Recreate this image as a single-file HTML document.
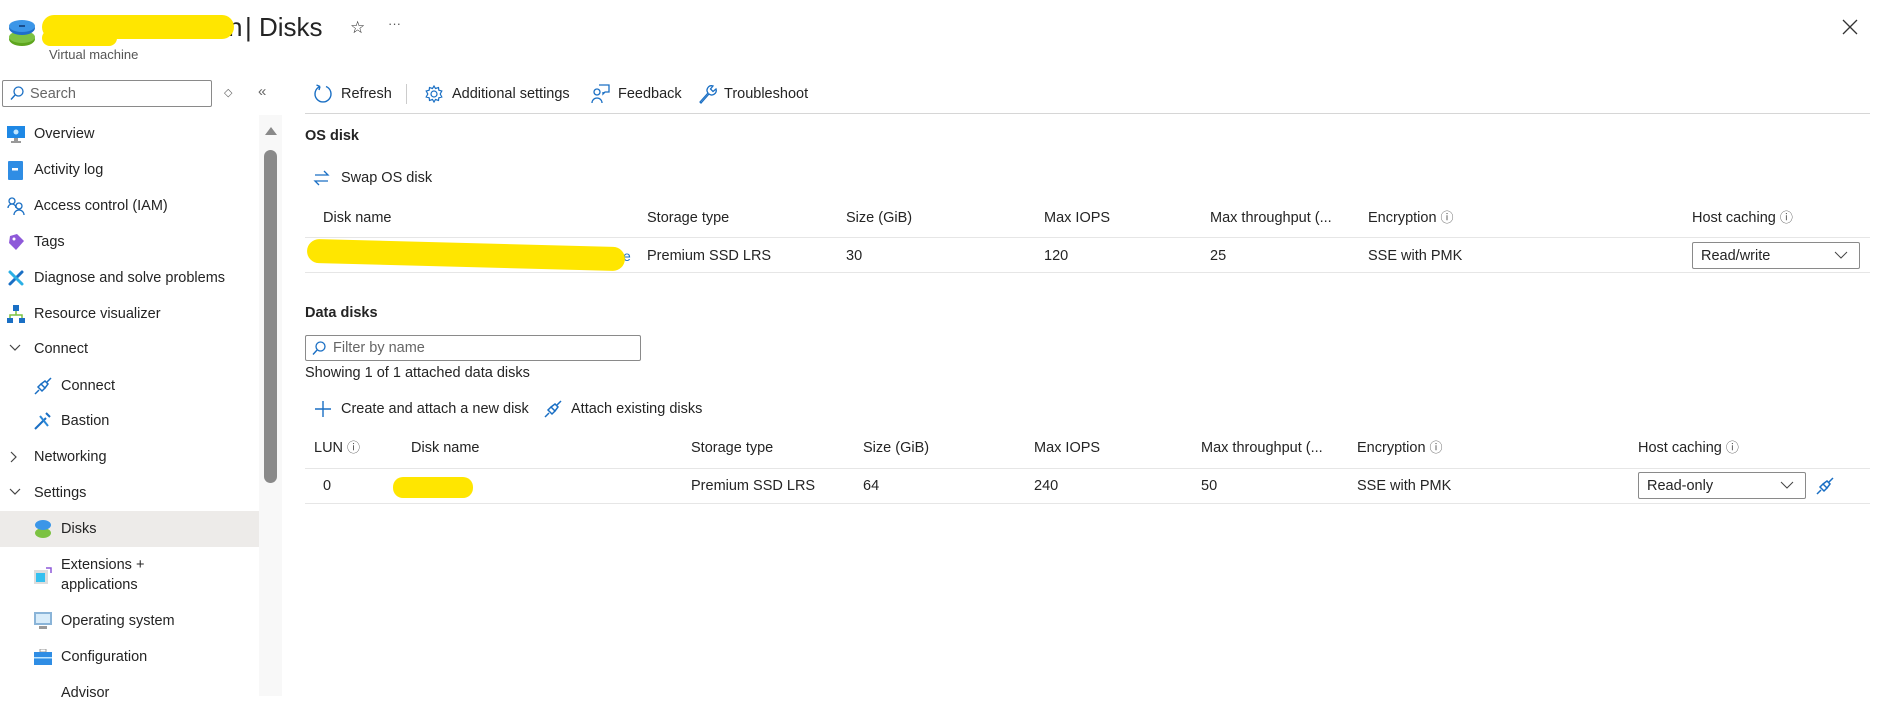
<!DOCTYPE html>
<html><head><meta charset="utf-8"><style>
*{margin:0;padding:0;box-sizing:border-box}
body{width:1890px;height:696px;overflow:hidden;background:#fff;font-family:"Liberation Sans",sans-serif;color:#242424;font-size:14.5px;position:relative}
.a{position:absolute;white-space:nowrap;line-height:20px;height:20px}
.ln{position:absolute;height:1px;background:#e6e6e6}
.box{position:absolute;border:1px solid #8a8a8a;border-radius:2px}
svg{position:absolute}
.b{font-weight:bold}
</style></head><body>
<!-- header -->
<svg style="left:7px;top:17px" width="30" height="32" viewBox="0 0 30 32"><ellipse cx="15" cy="22" rx="13" ry="7" fill="#5ea51e"/><ellipse cx="15" cy="20" rx="13" ry="6" fill="#7cc242"/><ellipse cx="15" cy="11" rx="13" ry="7" fill="#1f6fc9"/><ellipse cx="15" cy="9" rx="13" ry="6" fill="#3b96e8"/><rect x="12" y="8" width="6" height="2" fill="#1a4f8f"/></svg>
<div class="a" style="left:228px;top:12px;height:30px;line-height:30px;font-size:26px">n</div>
<div style="position:absolute;left:42px;top:15px;width:192px;height:24px;background:#ffe600;border-radius:12px"></div>
<div style="position:absolute;left:42px;top:30px;width:75px;height:16px;background:#ffe600;border-radius:8px"></div>
<div class="a" style="left:245px;top:12px;height:30px;line-height:30px;font-size:26px">| Disks</div>
<div class="a" style="left:350px;top:18px;font-size:17px">☆</div>
<div class="a" style="left:388px;top:14px;font-size:13px;color:#555">···</div>
<div class="a" style="left:49px;top:45px;font-size:13px;color:#555">Virtual machine</div>
<svg style="left:1842px;top:19px" width="16" height="16" viewBox="0 0 16 16"><path d="M1 1L15 15M15 1L1 15" stroke="#333" stroke-width="1.3"/></svg>
<!-- search -->
<div class="box" style="left:2px;top:80px;width:210px;height:27px"></div>
<svg style="left:10px;top:86px" width="14" height="15" viewBox="0 0 14 15"><circle cx="8.5" cy="5.5" r="4.5" fill="none" stroke="#1a6fc4" stroke-width="1.3"/><path d="M5.5 8.5L1 13.5" stroke="#1a6fc4" stroke-width="1.4"/></svg>
<div class="a" style="left:30px;top:84px;color:#666">Search</div>
<div class="a" style="left:224px;top:83px;font-size:11px;color:#666">◇</div>
<div class="a" style="left:258px;top:82px;font-size:15px;color:#666">«</div>
<!-- sidebar scroll -->
<div style="position:absolute;left:259px;top:115px;width:23px;height:581px;background:#f8f8f8"></div>
<svg style="left:263px;top:125px" width="16" height="12" viewBox="0 0 16 12"><path d="M8 2L14 10H2Z" fill="#8a8a8a"/></svg>
<div style="position:absolute;left:264px;top:150px;width:13px;height:333px;background:#8a8a8a;border-radius:7px"></div>
<div style="position:absolute;left:0;top:511px;width:259px;height:36px;background:#edebe9"></div>
<!-- sidebar icons -->
<svg style="left:7px;top:126px" width="18" height="17" viewBox="0 0 18 17"><rect x="0" y="0" width="18" height="12" fill="#1e88e5"/><rect x="7" y="12" width="4" height="3" fill="#999"/><rect x="4" y="15" width="10" height="2" fill="#999"/><circle cx="9" cy="6" r="2.5" fill="#bfe6ff"/></svg>
<svg style="left:8px;top:161px" width="16" height="19" viewBox="0 0 16 19"><rect width="15" height="19" rx="1" fill="#2f8de4"/><rect x="4" y="7" width="6" height="2.5" fill="#fff"/></svg>
<svg style="left:7px;top:197px" width="18" height="18" viewBox="0 0 18 18" fill="none" stroke="#1a6fc4" stroke-width="1.3"><circle cx="5" cy="4" r="3"/><path d="M1 11a4 4 0 0 1 8 0"/><circle cx="12" cy="9" r="3"/><path d="M7 18a5 5 0 0 1 10 0"/></svg>
<svg style="left:7px;top:233px" width="18" height="18" viewBox="0 0 18 18"><path d="M10 1L17 8L9 17L2 10L3 3Z" fill="#8e59d9"/><circle cx="7" cy="6" r="1.5" fill="#fff"/></svg>
<svg style="left:7px;top:269px" width="18" height="18" viewBox="0 0 18 18" stroke-width="3" stroke-linecap="round"><path d="M3 15L15 3" stroke="#1a6fc4"/><path d="M3 3L15 15" stroke="#2bb0e5"/></svg>
<svg style="left:7px;top:305px" width="18" height="18" viewBox="0 0 18 18"><path d="M9 5V10M3 15V10H15V15" stroke="#7cc242" stroke-width="1.5" fill="none"/><rect x="6" y="0" width="6" height="6" fill="#1a6fc4"/><rect x="0" y="13" width="6" height="5" fill="#1a6fc4"/><rect x="12" y="13" width="6" height="5" fill="#1a6fc4"/></svg>
<svg style="left:9px;top:343px" width="12" height="10" viewBox="0 0 12 10"><path d="M1 2L6 7L11 2" stroke="#444" fill="none" stroke-width="1.2"/></svg>
<svg style="left:34px;top:377px" width="18" height="18" viewBox="0 0 18 18" fill="none" stroke="#1a6fc4" stroke-width="1.5"><path d="M1 17L5 13M13 5L17 1"/><path d="M4 10L8 14L11 11L7 7Z"/><path d="M7 7L11 4L14 7L11 11"/></svg>
<svg style="left:34px;top:412px" width="18" height="18" viewBox="0 0 18 18" stroke-width="2"><path d="M1 17L12 6" stroke="#1a6fc4"/><path d="M6 4L14 14" stroke="#2b88d8"/><path d="M12 1L16 5" stroke="#1a6fc4"/></svg>
<svg style="left:9px;top:451px" width="10" height="12" viewBox="0 0 10 12"><path d="M2 1L7 6L2 11" stroke="#444" fill="none" stroke-width="1.2"/></svg>
<svg style="left:9px;top:487px" width="12" height="10" viewBox="0 0 12 10"><path d="M1 2L6 7L11 2" stroke="#444" fill="none" stroke-width="1.2"/></svg>
<svg style="left:34px;top:520px" width="18" height="18" viewBox="0 0 18 18"><ellipse cx="9" cy="13" rx="8" ry="5" fill="#7cc242"/><ellipse cx="9" cy="5" rx="8" ry="5" fill="#3b96e8"/></svg>
<svg style="left:34px;top:567px" width="18" height="18" viewBox="0 0 18 18"><rect x="0" y="3" width="14" height="14" fill="#ddd"/><rect x="2" y="6" width="9" height="9" fill="#35c0ef"/><path d="M12 1H17V6" stroke="#8e59d9" stroke-width="1.5" fill="none"/></svg>
<svg style="left:34px;top:612px" width="18" height="18" viewBox="0 0 18 18"><rect x="0" y="0" width="18" height="13" fill="#8ab4d8"/><rect x="2" y="2" width="14" height="9" fill="#d8ecfa"/><rect x="5" y="14" width="8" height="3" fill="#999"/></svg>
<svg style="left:34px;top:649px" width="18" height="16" viewBox="0 0 18 16"><rect x="6" y="0" width="6" height="3" fill="none" stroke="#999"/><rect x="0" y="3" width="18" height="13" fill="#2f8de4"/><rect x="0" y="8" width="18" height="1.5" fill="#bfe6ff"/></svg>
<div class="a" style="left:34px;top:124px">Overview</div>
<div class="a" style="left:34px;top:160px">Activity log</div>
<div class="a" style="left:34px;top:196px">Access control (IAM)</div>
<div class="a" style="left:34px;top:232px">Tags</div>
<div class="a" style="left:34px;top:268px">Diagnose and solve problems</div>
<div class="a" style="left:34px;top:304px">Resource visualizer</div>
<div class="a" style="left:34px;top:339px">Connect</div>
<div class="a" style="left:61px;top:376px">Connect</div>
<div class="a" style="left:61px;top:411px">Bastion</div>
<div class="a" style="left:34px;top:447px">Networking</div>
<div class="a" style="left:34px;top:483px">Settings</div>
<div class="a" style="left:61px;top:519px">Disks</div>
<div class="a" style="left:61px;top:555px">Extensions +</div>
<div class="a" style="left:61px;top:575px">applications</div>
<div class="a" style="left:61px;top:611px">Operating system</div>
<div class="a" style="left:61px;top:647px">Configuration</div>
<div class="a" style="left:61px;top:683px">Advisor</div>
<!-- toolbar -->
<svg style="left:313px;top:84px" width="20" height="20" viewBox="0 0 20 20" fill="none" stroke="#1a6fc4" stroke-width="1.4"><path d="M7 2.5A8 8 0 1 0 13 2.5"/><path d="M7 2.5L3.5 1M7 2.5L6 6"/></svg>
<div class="a" style="left:341px;top:84px">Refresh</div>
<div style="position:absolute;left:406px;top:84px;width:1px;height:20px;background:#ccc"></div>
<svg style="left:425px;top:85px" width="18" height="18" viewBox="0 0 18 18" fill="none" stroke="#1a6fc4" stroke-width="1.2"><circle cx="9" cy="9" r="3"/><path d="M9 1L10.5 3.5L13.5 2.5L13.8 5.2L16.8 6L15.2 9L16.8 12L13.8 12.8L13.5 15.5L10.5 14.5L9 17L7.5 14.5L4.5 15.5L4.2 12.8L1.2 12L2.8 9L1.2 6L4.2 5.2L4.5 2.5L7.5 3.5Z"/></svg>
<div class="a" style="left:452px;top:84px">Additional settings</div>
<svg style="left:590px;top:84px" width="20" height="20" viewBox="0 0 20 20" fill="none" stroke="#1a6fc4" stroke-width="1.3"><circle cx="7" cy="8" r="3"/><path d="M2 19a5 5 0 0 1 10 0"/><path d="M9 1H19V8H15L13 10V8"/></svg>
<div class="a" style="left:618px;top:84px">Feedback</div>
<svg style="left:698px;top:84px" width="20" height="20" viewBox="0 0 20 20" fill="none" stroke="#1a6fc4" stroke-width="1.3"><path d="M2 18L10 9A4.5 4.5 0 0 1 15 2L12.5 5L15 7.5L18 5A4.5 4.5 0 0 1 11 10L3 19Z"/></svg>
<div class="a" style="left:724px;top:84px">Troubleshoot</div>
<div style="position:absolute;left:305px;top:113px;width:1565px;height:1px;background:#d6d6d6"></div>
<!-- OS disk -->
<div class="a b" style="left:305px;top:126px">OS disk</div>
<svg style="left:313px;top:169px" width="17" height="18" viewBox="0 0 17 18" fill="none" stroke="#1a6fc4" stroke-width="1.3"><path d="M2 6H15L11 2M15 12H2L6 16"/></svg>
<div class="a" style="left:341px;top:168px">Swap OS disk</div>
<div class="a" style="left:323px;top:208px">Disk name</div>
<div class="a" style="left:647px;top:208px">Storage type</div>
<div class="a" style="left:846px;top:208px">Size (GiB)</div>
<div class="a" style="left:1044px;top:208px">Max IOPS</div>
<div class="a" style="left:1210px;top:208px">Max throughput (...</div>
<div class="a" style="left:1368px;top:208px">Encryption <span style="font-size:13px;color:#555">ⓘ</span></div>
<div class="a" style="left:1692px;top:208px">Host caching <span style="font-size:13px;color:#555">ⓘ</span></div>
<div class="ln" style="left:305px;top:237px;width:1565px"></div>
<div class="a" style="left:623px;top:246px;color:#1a6fc4;font-size:14px">e</div>
<div style="position:absolute;left:307px;top:243px;width:318px;height:24px;background:#ffe600;border-radius:12px;transform:rotate(1.5deg)"></div>
<div class="a" style="left:647px;top:246px">Premium SSD LRS</div>
<div class="a" style="left:846px;top:246px">30</div>
<div class="a" style="left:1044px;top:246px">120</div>
<div class="a" style="left:1210px;top:246px">25</div>
<div class="a" style="left:1368px;top:246px">SSE with PMK</div>
<div class="box" style="left:1692px;top:242px;width:168px;height:27px"></div>
<div class="a" style="left:1701px;top:246px">Read/write</div>
<svg style="left:1834px;top:251px" width="14" height="8" viewBox="0 0 14 8"><path d="M1 1L7 7L13 1" stroke="#444" fill="none"/></svg>
<div class="ln" style="left:305px;top:272px;width:1565px"></div>
<!-- Data disks -->
<div class="a b" style="left:305px;top:303px">Data disks</div>
<div class="box" style="left:305px;top:335px;width:336px;height:26px"></div>
<svg style="left:312px;top:341px" width="14" height="15" viewBox="0 0 14 15"><circle cx="8.5" cy="5.5" r="4.5" fill="none" stroke="#1a6fc4" stroke-width="1.3"/><path d="M5.5 8.5L1 13.5" stroke="#1a6fc4" stroke-width="1.4"/></svg>
<div class="a" style="left:333px;top:338px;color:#666">Filter by name</div>
<div class="a" style="left:305px;top:363px">Showing 1 of 1 attached data disks</div>
<svg style="left:314px;top:400px" width="18" height="18" viewBox="0 0 18 18"><path d="M9 1V17M1 9H17" stroke="#1a6fc4" stroke-width="1.4"/></svg>
<div class="a" style="left:341px;top:399px">Create and attach a new disk</div>
<svg style="left:544px;top:400px" width="18" height="18" viewBox="0 0 18 18" fill="none" stroke="#1a6fc4" stroke-width="1.5"><path d="M1 17L5 13M13 5L17 1"/><path d="M4 10L8 14L11 11L7 7Z"/><path d="M7 7L11 4L14 7L11 11"/></svg>
<div class="a" style="left:571px;top:399px">Attach existing disks</div>
<div class="a" style="left:314px;top:438px">LUN <span style="font-size:13px;color:#555">ⓘ</span></div>
<div class="a" style="left:411px;top:438px">Disk name</div>
<div class="a" style="left:691px;top:438px">Storage type</div>
<div class="a" style="left:863px;top:438px">Size (GiB)</div>
<div class="a" style="left:1034px;top:438px">Max IOPS</div>
<div class="a" style="left:1201px;top:438px">Max throughput (...</div>
<div class="a" style="left:1357px;top:438px">Encryption <span style="font-size:13px;color:#555">ⓘ</span></div>
<div class="a" style="left:1638px;top:438px">Host caching <span style="font-size:13px;color:#555">ⓘ</span></div>
<div class="ln" style="left:305px;top:468px;width:1565px"></div>
<div class="a" style="left:323px;top:476px">0</div>
<div style="position:absolute;left:393px;top:477px;width:80px;height:21px;background:#ffe600;border-radius:10px"></div>
<div class="a" style="left:691px;top:476px">Premium SSD LRS</div>
<div class="a" style="left:863px;top:476px">64</div>
<div class="a" style="left:1034px;top:476px">240</div>
<div class="a" style="left:1201px;top:476px">50</div>
<div class="a" style="left:1357px;top:476px">SSE with PMK</div>
<div class="box" style="left:1638px;top:472px;width:168px;height:27px"></div>
<div class="a" style="left:1647px;top:476px">Read-only</div>
<svg style="left:1780px;top:481px" width="14" height="8" viewBox="0 0 14 8"><path d="M1 1L7 7L13 1" stroke="#444" fill="none"/></svg>
<svg style="left:1816px;top:477px" width="18" height="18" viewBox="0 0 18 18" fill="none" stroke="#1a6fc4" stroke-width="1.5"><path d="M1 17L5 13M13 5L17 1"/><path d="M4 10L8 14L11 11L7 7Z"/><path d="M7 7L11 4L14 7L11 11"/></svg>
<div class="ln" style="left:305px;top:503px;width:1565px"></div>
</body></html>
